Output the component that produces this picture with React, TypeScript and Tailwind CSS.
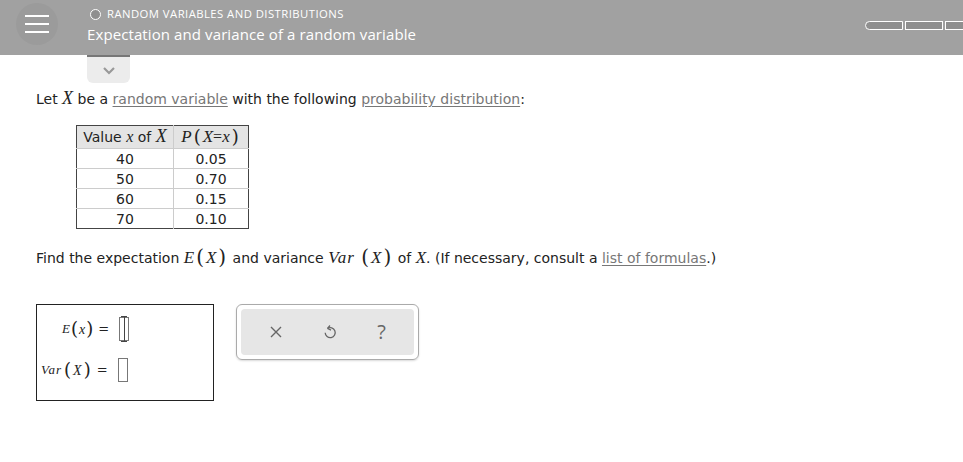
import React from 'react';

const M = ({ children }: { children: React.ReactNode }) => (
  <span className="italic" style={{ fontFamily: '"Liberation Serif", "DejaVu Serif", serif' }}>{children}</span>
);

const Paren = ({ children, size = 'text-[20px]', gap = 'mx-[2px]' }: { children: React.ReactNode; size?: string; gap?: string }) => (
  <span className={`${size} ${gap} leading-none align-[-1px]`} style={{ fontFamily: '"DejaVu Serif", serif' }}>{children}</span>
);

const AnswerInput = ({ cursor }: { cursor?: boolean }) => (
  <span className="relative inline-block w-[10px] h-[24px] border border-[#777] align-middle">
    {cursor && (
      <>
        <span className="absolute -top-[2px] left-[1px] w-[6px] h-px bg-[#444]" />
        <span className="absolute -bottom-[2px] left-[1px] w-[6px] h-px bg-[#444]" />
        <span className="absolute left-[4px] -top-[2px] w-px h-[26px] bg-[#444]" />
      </>
    )}
  </span>
);

export default function App() {
  const rows = [
    ['40', '0.05'],
    ['50', '0.70'],
    ['60', '0.15'],
    ['70', '0.10'],
  ];

  return (
    <div className="w-[963px] h-[462px] bg-white overflow-hidden relative" style={{ fontFamily: '"DejaVu Sans", Verdana, sans-serif' }}>
      {/* Header */}
      <div className="h-[55px] bg-[#a1a1a1] flex items-start relative" style={{ fontFamily: '"Open Sans", "Liberation Sans", sans-serif' }}>
        <div className="ml-[16px] mt-[3px] w-[42px] h-[42px] rounded-full bg-[#9b9b9b] flex flex-col items-center justify-center gap-[6px]">
          <span className="block w-[24px] h-[2px] bg-white" />
          <span className="block w-[24px] h-[2px] bg-white" />
          <span className="block w-[24px] h-[2px] bg-white" />
        </div>
        <div className="ml-[32px] mt-[6px] text-white">
          <div className="flex items-center gap-[6px] text-[11.3px] leading-[16px] tracking-[0.45px]">
            <span className="w-[11px] h-[11px] rounded-full border-[1.5px] border-white bg-[#8f8f8f]" />
            <span>RANDOM VARIABLES AND DISTRIBUTIONS</span>
          </div>
          <div className="-ml-[3px] text-[15px] leading-[22px] mt-[1px] tracking-[0.1px]">Expectation and variance of a random variable</div>
        </div>
        <div className="absolute left-[865px] top-[21px] flex gap-[2px]">
          <span className="w-[38px] h-[9px] border border-white rounded-l-full bg-[#8f8f8f]" />
          <span className="w-[38px] h-[9px] border border-white bg-[#8f8f8f]" />
          <span className="w-[38px] h-[9px] border border-white bg-[#8f8f8f]" />
        </div>
      </div>

      {/* Chevron tab */}
      <div className="ml-[87px] w-[43px] h-[28px] bg-[#ececec] rounded-b-[6px] border-t-[2px] border-[#777] flex items-center justify-center">
        <svg width="14" height="9" viewBox="0 0 14 9"><path d="M2 2l5 5 5-5" fill="none" stroke="#999" strokeWidth="2.2" /></svg>
      </div>

      {/* Body */}
      <div className="pl-[36px] text-[14px] text-[#222]">
        <p className="mt-[5px] leading-[20px]">
          Let <M><span className="text-[18px]">X</span></M> be a{' '}
          <span className="text-[#777] underline underline-offset-2">random variable</span> with the following{' '}
          <span className="text-[#777] underline underline-offset-2">probability distribution</span>:
        </p>

        <table className="ml-[40px] mt-[15px] border border-[#444] border-collapse">
          <thead>
            <tr className="bg-[#e4e4e4]">
              <th className="w-[97px] h-[23px] font-normal px-0 border-r border-[#ccc] whitespace-nowrap leading-[20px]">
                Value <M><span className="text-[16px]">x</span></M> of <M><span className="text-[18px]">X</span></M>
              </th>
              <th className="w-[75px] h-[23px] font-normal px-0 whitespace-nowrap leading-[20px]">
                <M><span className="text-[17px]">P</span></M>
                <Paren size="text-[18px]">(</Paren>
                <M><span className="text-[17px]">X</span></M>
                <span style={{ fontFamily: '"Liberation Serif", serif' }} className="text-[16px]">=</span>
                <M><span className="text-[17px]">x</span></M>
                <Paren size="text-[18px]">)</Paren>
              </th>
            </tr>
          </thead>
          <tbody>
            {rows.map(([v, p]) => (
              <tr key={v} className="border-t border-[#ccc]">
                <td className="text-center border-r border-[#ccc] h-[20px] leading-[18px] p-0">{v}</td>
                <td className="text-center h-[20px] leading-[18px] p-0">{p}</td>
              </tr>
            ))}
          </tbody>
        </table>

        <p className="mt-[18px] leading-[22px]">
          Find the expectation <M><span className="text-[17px]">E</span></M>
          <Paren>(</Paren><M><span className="text-[17px]">X</span></M><Paren>)</Paren> and variance{' '}
          <M><span className="text-[17px] tracking-[1px]">Var</span></M> <Paren>(</Paren><M><span className="text-[17px]">X</span></M><Paren>)</Paren> of{' '}
          <M><span className="text-[17px]">X</span></M>. (If necessary, consult a{' '}
          <span className="text-[#777] underline underline-offset-2">list of formulas</span>.)
        </p>

        <div className="mt-[34px] flex items-start gap-[22px]">
          <div className="w-[178px] h-[97px] border border-[#222] flex flex-col">
            <div className="flex items-center h-[46px] pl-[25px] pt-[2px] text-[13px]">
              <M><span className="text-[13px]">E</span></M>
              <Paren size="text-[18px]" gap="mx-[1px]">(</Paren><M><span className="text-[14px]">x</span></M><Paren size="text-[18px]" gap="mx-[1px]">)</Paren>
              <span className="ml-[4px] mr-[10px]">=</span>
              <AnswerInput cursor />
            </div>
            <div className="flex items-center h-[38px] pl-[4px] text-[13px]">
              <M><span className="text-[13px] tracking-[1px]">Var</span></M>
              <Paren size="text-[18px]">(</Paren><M><span className="text-[14px]">X</span></M><Paren size="text-[18px]">)</Paren>
              <span className="ml-[4px] mr-[10px]">=</span>
              <AnswerInput />
            </div>
          </div>

          <div className="w-[183px] h-[56px] border border-[#aaa] rounded-[6px] p-[4px] shadow-[0_1px_2px_rgba(0,0,0,0.15)]">
            <div className="h-full bg-[#e6e6e6] rounded-[4px] flex items-center justify-around px-[8px] text-[#666]">
              <svg width="14" height="14" viewBox="0 0 14 14"><path d="M2 2l10 10M12 2L2 12" stroke="#666" strokeWidth="1.4" /></svg>
              <svg width="14" height="16" viewBox="0 0 14 16">
                <path d="M4.5 4.5A5 5 0 1 1 2.2 8.8" fill="none" stroke="#666" strokeWidth="1.3" />
                <path d="M4.5 4.5L7 1.5M4.5 4.5L8 6.2" fill="none" stroke="#666" strokeWidth="1.3" />
              </svg>
              <span className="text-[20px] leading-none" style={{ fontFamily: '"Open Sans", sans-serif' }}>?</span>
            </div>
          </div>
        </div>
      </div>
    </div>
  );
}
